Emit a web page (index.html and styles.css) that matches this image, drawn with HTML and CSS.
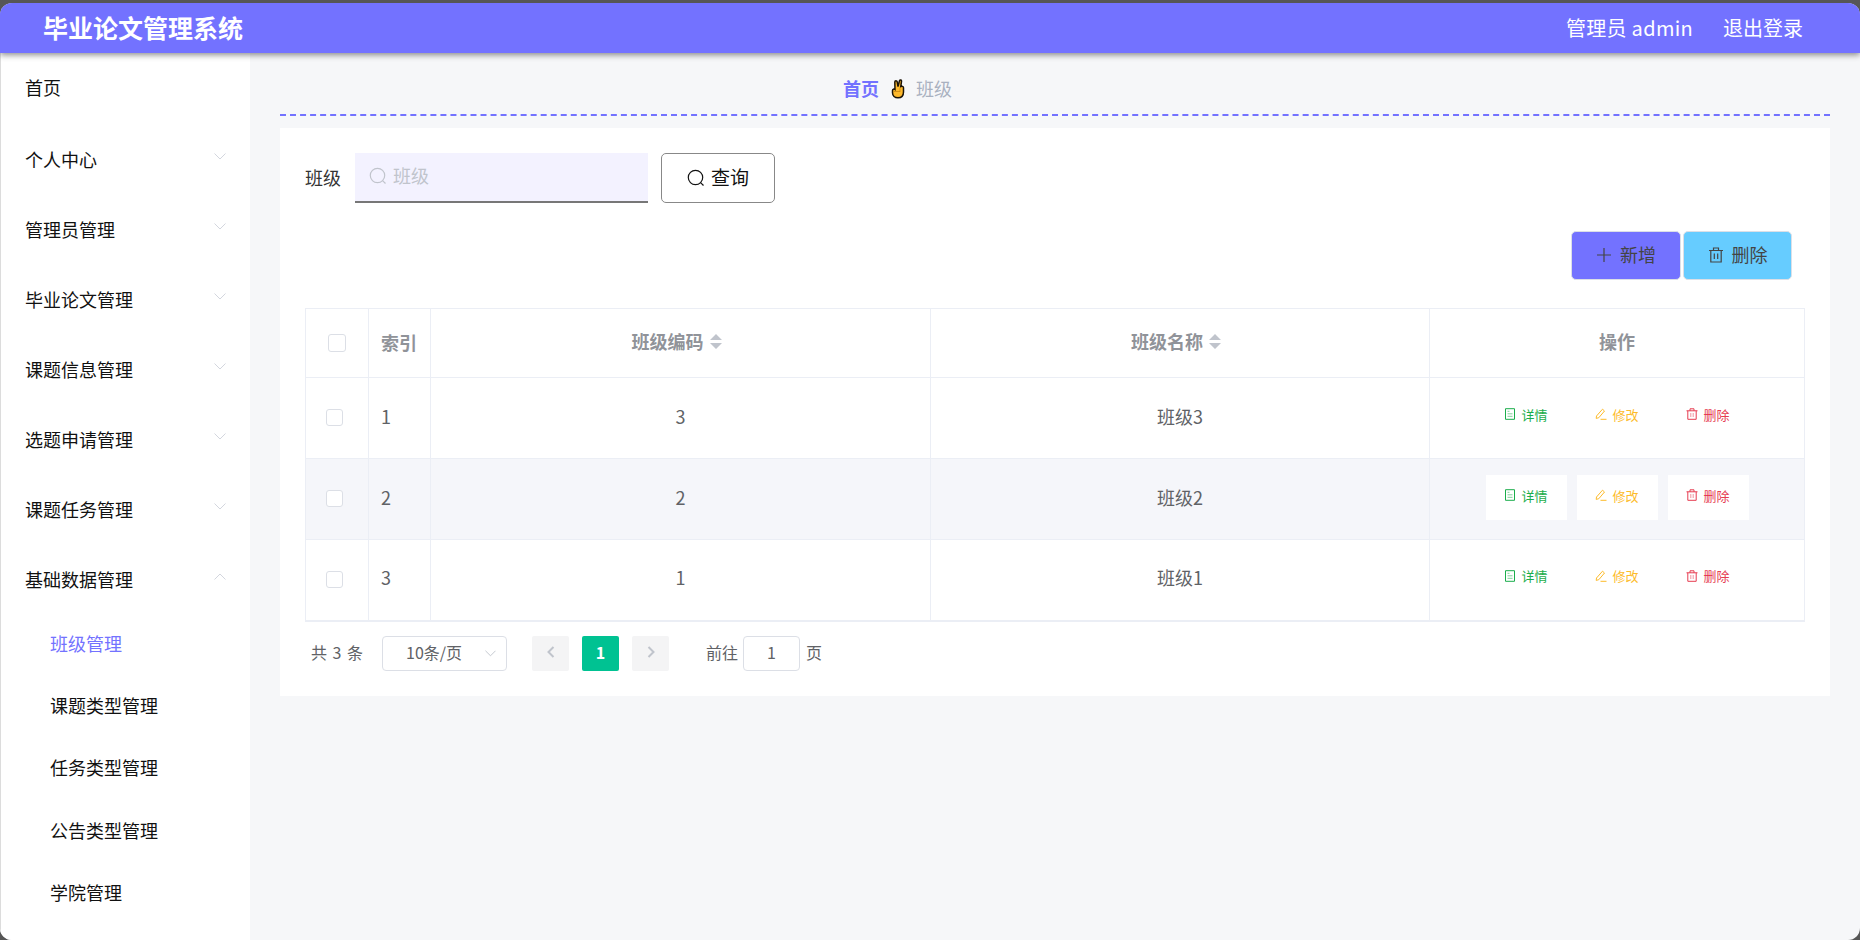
FILE: index.html
```html
<!DOCTYPE html>
<html lang="zh-CN">
<head>
    <meta charset="UTF-8">
    <title>毕业论文管理系统</title>
    <link rel="stylesheet" href="styles.css">
</head>
<body>
    <div class="app">
        <header class="topbar">
            <div class="brand">毕业论文管理系统</div>
            <div class="user-links">
                <span class="user-name">管理员 admin</span>
                <span>退出登录</span>
            </div>
        </header>

        <div class="layout">
            <aside class="sidebar">
                <div class="menu-item menu-home">首页</div>
                <div class="menu-item">个人中心<svg class="chevron" viewBox="0 0 12 7"><path d="M.5.5 6 6l5.500-5.500"/></svg></div>
                <div class="menu-item">管理员管理<svg class="chevron" viewBox="0 0 12 7"><path d="M.5.5 6 6l5.500-5.500"/></svg></div>
                <div class="menu-item">毕业论文管理<svg class="chevron" viewBox="0 0 12 7"><path d="M.5.5 6 6l5.500-5.500"/></svg></div>
                <div class="menu-item">课题信息管理<svg class="chevron" viewBox="0 0 12 7"><path d="M.5.5 6 6l5.500-5.500"/></svg></div>
                <div class="menu-item">选题申请管理<svg class="chevron" viewBox="0 0 12 7"><path d="M.5.5 6 6l5.500-5.500"/></svg></div>
                <div class="menu-item">课题任务管理<svg class="chevron" viewBox="0 0 12 7"><path d="M.5.5 6 6l5.500-5.500"/></svg></div>
                <div class="menu-item">基础数据管理<svg class="chevron" viewBox="0 0 12 7"><path d="M.5 6.500 6 1l5.500 5.500"/></svg></div>
                <div class="submenu">
                    <div class="submenu-item active">班级管理</div>
                    <div class="submenu-item">课题类型管理</div>
                    <div class="submenu-item">任务类型管理</div>
                    <div class="submenu-item">公告类型管理</div>
                    <div class="submenu-item">学院管理</div>
                </div>
            </aside>

            <main class="main">
                <div class="breadcrumb">
                    <b>首页</b>
                    <svg class="hand" viewBox="0 0 14 20">
                        <path d="M4 10.500 3.800 3C3.800 1.400 6 1.400 6.200 3L7 7.500 8.500 1.800C8.900.5 10.800.9 10.500 2.400L9.800 7.500c1-.5 2.700-.3 2.700 1.200V13c0 3.500-2.200 5.800-5.500 5.800-3.200 0-5.500-2-5.500-5V11.500C1.500 10 3 9.800 4 10.500Z" fill="#fdb92c" stroke="#1c1407" stroke-width="1.500"/>
                        <path d="M3 12.500h6M9 9v4" fill="none" stroke="#c98512" stroke-width=".8"/>
                    </svg>
                    <span>班级</span>
                </div>

                <section class="card">
                    <div class="search-row">
                        <label class="search-label">班级</label>
                        <div class="search-input">
                            <svg class="icon-search" viewBox="0 0 18 18"><circle cx="8.500" cy="8.500" r="7.200"/><path d="m13.800 13.800 2.700 2.700"/></svg>
                            <span>班级</span>
                        </div>
                        <button class="btn-query">
                            <svg class="icon-search" viewBox="0 0 18 18"><circle cx="8.500" cy="8.500" r="7.200"/><path d="m13.800 13.800 2.700 2.700"/></svg>
                            <span>查询</span>
                        </button>
                    </div>

                    <div class="action-row">
                        <button class="btn-action btn-add">
                            <svg class="icon-action" viewBox="0 0 16 16"><path d="M8 1v14M1 8h14"/></svg>
                            <span>新增</span>
                        </button>
                        <button class="btn-action btn-remove">
                            <svg class="icon-action" viewBox="0 0 16 16"><path d="M1 3.500h14M5.500 3.500V1h5v2.500M2.800 3.500V15h10.400V3.500M6.300 6.500v5.500M9.700 6.500v5.500"/></svg>
                            <span>删除</span>
                        </button>
                    </div>

                    <table class="data-table">
                        <colgroup>
                            <col class="col-check">
                            <col class="col-index">
                            <col class="col-code">
                            <col class="col-name">
                            <col>
                        </colgroup>
                        <thead>
                            <tr>
                                <th><span class="checkbox head-check"></span></th>
                                <th class="left">索引</th>
                                <th>班级编码<svg class="sort" viewBox="0 0 12 15"><path d="M6 0l6 6H0zM6 15l6-6H0z"/></svg></th>
                                <th>班级名称<svg class="sort" viewBox="0 0 12 15"><path d="M6 0l6 6H0zM6 15l6-6H0z"/></svg></th>
                                <th>操作</th>
                            </tr>
                        </thead>
                        <tbody>
                            <tr>
                                <td><span class="checkbox"></span></td>
                                <td class="left">1</td>
                                <td>3</td>
                                <td>班级3</td>
                                <td>
                                    <div class="ops">
                                        <span class="op op-view"><svg viewBox="0 0 12 12"><path d="M1.500.7h9v10.600h-9z"/><path class="soft" d="M3.500 3.300h2M3.500 5.800h5M3.500 8.300h5"/></svg>详情</span>
                                        <span class="op op-edit"><svg viewBox="0 0 12 12"><path d="M1.500 8 7.500 1.200l2 1.800-5.700 6.700-2.600.7zM5.500 11.300h6"/></svg>修改</span>
                                        <span class="op op-del"><svg viewBox="0 0 12 12"><path d="M.5 2.800h11M4 2.800V.8h4v2M1.800 2.800v8.500h8.400V2.800"/><path class="soft" d="M4.800 5v4M7.200 5v4"/></svg>删除</span>
                                    </div>
                                </td>
                            </tr>
                            <tr class="hover">
                                <td><span class="checkbox"></span></td>
                                <td class="left">2</td>
                                <td>2</td>
                                <td>班级2</td>
                                <td>
                                    <div class="ops">
                                        <span class="op op-view"><svg viewBox="0 0 12 12"><path d="M1.500.7h9v10.600h-9z"/><path class="soft" d="M3.500 3.300h2M3.500 5.800h5M3.500 8.300h5"/></svg>详情</span>
                                        <span class="op op-edit"><svg viewBox="0 0 12 12"><path d="M1.500 8 7.500 1.200l2 1.800-5.700 6.700-2.600.7zM5.500 11.300h6"/></svg>修改</span>
                                        <span class="op op-del"><svg viewBox="0 0 12 12"><path d="M.5 2.800h11M4 2.800V.8h4v2M1.800 2.800v8.500h8.400V2.800"/><path class="soft" d="M4.800 5v4M7.200 5v4"/></svg>删除</span>
                                    </div>
                                </td>
                            </tr>
                            <tr>
                                <td><span class="checkbox"></span></td>
                                <td class="left">3</td>
                                <td>1</td>
                                <td>班级1</td>
                                <td>
                                    <div class="ops">
                                        <span class="op op-view"><svg viewBox="0 0 12 12"><path d="M1.500.7h9v10.600h-9z"/><path class="soft" d="M3.500 3.300h2M3.500 5.800h5M3.500 8.300h5"/></svg>详情</span>
                                        <span class="op op-edit"><svg viewBox="0 0 12 12"><path d="M1.500 8 7.500 1.200l2 1.800-5.700 6.700-2.600.7zM5.500 11.300h6"/></svg>修改</span>
                                        <span class="op op-del"><svg viewBox="0 0 12 12"><path d="M.5 2.800h11M4 2.800V.8h4v2M1.800 2.800v8.500h8.400V2.800"/><path class="soft" d="M4.800 5v4M7.200 5v4"/></svg>删除</span>
                                    </div>
                                </td>
                            </tr>
                        </tbody>
                    </table>

                    <div class="pagination">
                        <span class="total">共 3 条</span>
                        <div class="page-size">10条/页<svg class="size-arrow" viewBox="0 0 12 7"><path d="M.5.500 6 6l5.500-5.500"/></svg></div>
                        <span class="page-btn"><svg viewBox="0 0 8 12"><path d="M6.500 1 1.500 6l5 5"/></svg></span>
                        <span class="page-btn current">1</span>
                        <span class="page-btn"><svg viewBox="0 0 8 12"><path d="m1.500 1 5 5-5 5"/></svg></span>
                        <span class="jump">前往</span>
                        <div class="jump-input">1</div>
                        <span class="jump-end">页</span>
                    </div>
                </section>
            </main>
        </div>
    </div>
</body>
</html>
```

FILE: styles.css
```css
:root {
    --primary-color: #7372ff;
    --bg-color: #f6f7f9;
    --border-color: #ebeef5;
    --cell-color: #606266;
    --head-color: #909399;
    --placeholder-color: #c0c4cc;
}

* {
    box-sizing: border-box;
    margin: 0;
    padding: 0;
}

html,
body {
    height: 940px;
    overflow: hidden;
}

body {
    background-color: #565656;
    padding-top: 3px;
    font-family: "Noto Sans CJK SC", "Noto Sans", sans-serif;
    font-size: 18px;
}

.app {
    height: 937px;
    display: flex;
    flex-direction: column;
    background-color: var(--bg-color);
    border-radius: 12px;
    overflow: hidden;
}

/* header */
.topbar {
    height: 50px;
    flex: none;
    display: flex;
    align-items: center;
    justify-content: space-between;
    padding: 0 57px 2px 43px;
    background-color: var(--primary-color);
    color: white;
    box-shadow: 0 2px 6px rgba(0, 0, 0, 0.45);
    position: relative;
}

.brand {
    font-size: 25px;
    font-weight: 700;
}

.user-links {
    display: flex;
    gap: 30px;
    font-size: 20px;
}

.user-name {
    letter-spacing: 0.3px;
}

.layout {
    flex: 1;
    display: flex;
    min-height: 0;
}

/* sidebar */
.sidebar {
    width: 250px;
    flex: none;
    background-color: white;
    border-left: 1px solid #dcdcdc;
    overflow: hidden;
}

.menu-item {
    height: 70px;
    display: flex;
    align-items: center;
    justify-content: space-between;
    padding: 0 24px 2px 24px;
    color: #111;
}

.menu-home {
    height: 72px;
    padding-bottom: 4px;
}

.chevron {
    width: 12px;
    height: 7px;
    margin-top: -5px;
    fill: none;
    stroke: #d3d6de;
    stroke-width: 1;
}

.submenu {
    margin-top: -2px;
}

.submenu-item {
    height: 62.4px;
    display: flex;
    align-items: center;
    padding: 0 0 3px 49px;
    color: #111;
}

.submenu-item.active {
    color: var(--primary-color);
}

/* main */
.main {
    flex: 1;
    padding: 0 30px;
    min-width: 0;
}

.breadcrumb {
    height: 63px;
    display: flex;
    align-items: center;
    padding: 8px 0 0 563px;
    border-bottom: 2px dashed var(--primary-color);
    color: #a9b1c0;
}

.breadcrumb b {
    color: var(--primary-color);
}

.hand {
    width: 14px;
    height: 20px;
    margin: 2px 11px 0 12px;
}

.card {
    margin-top: 12px;
    height: 568px;
    padding: 25px;
    background-color: white;
}

.search-row {
    display: flex;
    align-items: center;
    height: 50px;
}

.search-label {
    width: 50px;
    padding-bottom: 3px;
    color: #333;
}

.search-input {
    width: 293px;
    height: 50px;
    display: flex;
    align-items: center;
    gap: 6px;
    padding: 0 0 5px 14px;
    background-color: #f3f2ff;
    border-bottom: 2px solid #777;
    color: var(--placeholder-color);
}

.search-input .icon-search {
    stroke: var(--placeholder-color);
    margin-top: 3px;
}

.icon-search {
    width: 18px;
    height: 18px;
    fill: none;
    stroke: #111;
    stroke-width: 1.200;
}

.btn-query {
    width: 114px;
    height: 50px;
    margin-left: 13px;
    display: flex;
    align-items: center;
    justify-content: center;
    gap: 6px;
    padding-bottom: 4px;
    background-color: white;
    border: 1px solid #888;
    border-radius: 5px;
    font: inherit;
    font-size: 19px;
    color: #111;
}

.btn-query .icon-search {
    margin-top: 3px;
}

.action-row {
    display: flex;
    justify-content: flex-end;
    gap: 2px;
    margin: 28px 13px 28px 0;
}

.btn-action {
    width: 109px;
    height: 49px;
    display: flex;
    align-items: center;
    justify-content: center;
    gap: 8px;
    padding-bottom: 4px;
    border: 1px solid #dcdfe6;
    border-radius: 5px;
    font: inherit;
    color: #444;
}

.btn-add {
    width: 110px;
    background-color: var(--primary-color);
}

.btn-remove {
    background-color: #66ccff;
}

.icon-action {
    width: 16px;
    height: 16px;
    margin-top: 3px;
    fill: none;
    stroke: #444;
    stroke-width: 1.200;
}

/* table */
.data-table {
    width: 1500px;
    border-collapse: collapse;
    table-layout: fixed;
    color: var(--cell-color);
    border: 1px solid var(--border-color);
    border-bottom-width: 2px;
}

.col-check {
    width: 63px;
}

.col-index {
    width: 62px;
}

.col-code {
    width: 500px;
}

.col-name {
    width: 499px;
}

.data-table th,
.data-table td {
    border: 1px solid var(--border-color);
    text-align: center;
    vertical-align: middle;
    padding: 0 0 5px;
}

.data-table th {
    height: 69px;
    color: var(--head-color);
    font-weight: 700;
}

.data-table td {
    height: 81px;
}

.data-table .left {
    text-align: left;
    padding-left: 12px;
}

.data-table th.left {
    padding-bottom: 3px;
}

.data-table tr.hover td {
    background-color: #f5f6fa;
}

.checkbox {
    display: block;
    width: 17px;
    height: 17px;
    margin: 4px 0 0 20px;
    background-color: white;
    border: 1px solid #dcdfe6;
    border-radius: 3px;
}

.head-check {
    width: 18px;
    height: 18px;
    margin: 5px 0 0 22px;
}

.sort {
    display: inline-block;
    width: 12px;
    height: 15px;
    margin-left: 6px;
    margin-right: 8px;
    vertical-align: 0;
    fill: var(--placeholder-color);
}

.ops {
    display: flex;
    justify-content: center;
    gap: 10px;
    margin-top: 2px;
}

.op {
    width: 81px;
    height: 45px;
    display: flex;
    align-items: center;
    justify-content: center;
    gap: 5px;
    padding-bottom: 5px;
    font-size: 13px;
}

.hover .op {
    background-color: white;
}

.op svg {
    width: 12px;
    height: 12px;
    fill: none;
    stroke: currentColor;
    stroke-width: 1;
}

.op svg .soft {
    opacity: 0.55;
}

.op-view {
    color: #1aad4b;
}

.op-edit {
    color: #fdbb2a;
}

.op-del {
    color: #e63c51;
}

/* pagination */
.pagination {
    display: flex;
    align-items: center;
    height: 37px;
    margin-top: 13px;
    font-size: 16px;
    color: var(--cell-color);
}

.total {
    margin-left: 6px;
    width: 71px;
    word-spacing: 2px;
    padding-bottom: 3px;
}

.page-size {
    position: relative;
    width: 125px;
    height: 35px;
    margin-top: 1px;
    display: flex;
    align-items: center;
    padding: 0 0 3px 23px;
    border: 1px solid #dcdfe6;
    border-radius: 4px;
    margin-right: 25px;
}

.size-arrow {
    position: absolute;
    right: 10px;
    top: 13px;
    width: 11px;
    height: 7px;
    fill: none;
    stroke: var(--placeholder-color);
    stroke-width: 1;
}

.page-btn {
    width: 37px;
    height: 35px;
    display: flex;
    align-items: center;
    justify-content: center;
    margin-right: 13px;
    padding-bottom: 2px;
    background-color: #f4f4f5;
    border-radius: 2px;
    font-weight: 700;
}

.page-btn svg {
    width: 8px;
    height: 12px;
    fill: none;
    stroke: var(--placeholder-color);
    stroke-width: 2;
}

.page-btn.current {
    background-color: #00c292;
    color: white;
}

.jump {
    margin-left: 24px;
    margin-right: 5px;
    padding-bottom: 3px;
}

.jump-input {
    width: 57px;
    height: 35px;
    margin-top: 1px;
    display: flex;
    align-items: center;
    justify-content: center;
    padding-bottom: 3px;
    border: 1px solid #dcdfe6;
    border-radius: 4px;
}

.jump-end {
    margin-left: 6px;
    padding-bottom: 3px;
}
```
